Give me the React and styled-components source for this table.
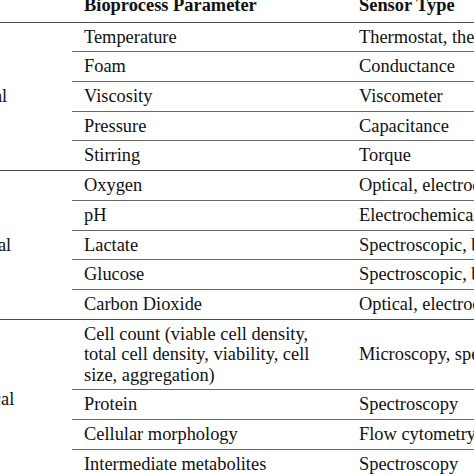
import React from "react"
import styled, { createGlobalStyle } from "styled-components"

const GlobalStyle = createGlobalStyle`
  html, body {
    margin: 0;
    padding: 0;
    background: #ffffff;
    overflow: hidden;
  }
`

const Page = styled.div`
  width: 474px;
  height: 474px;
  overflow: hidden;
  background: #ffffff;
`

const Table = styled.table`
  border-collapse: collapse;
  margin-top: -9px;
  margin-left: -120px;
  width: 767px;
  font-family: "Liberation Serif", "Times New Roman", serif;
  font-size: 18.4px;
  line-height: 20.6px;
  color: #111111;
  table-layout: fixed;
`

const Col = styled.col`
  width: ${p => p.w}px;
`

const HeadCell = styled.th`
  text-align: ${p => (p.center ? "center" : "left")};
  font-weight: 700;
  padding: 4.05px 12px 6.05px;
  border-bottom: 1.5px solid #4a4a4a;
  white-space: nowrap;
`

const GroupCell = styled.td`
  text-align: center;
  vertical-align: middle;
  padding: 4.05px 12px;
  border-bottom: 1.5px solid #4a4a4a;
  white-space: nowrap;
`

const Cell = styled.td`
  text-align: left;
  vertical-align: middle;
  padding: 4.05px 12px;
  border-bottom: ${p => (p.last ? "1.5px solid #4a4a4a" : "1.3px solid #6a6a6a")};
  white-space: ${p => (p.wrap ? "normal" : "nowrap")};
  overflow: hidden;
`

const groups = [
  {
    name: "Physical",
    rows: [
      ["Temperature", "Thermostat, thermocouple"],
      ["Foam", "Conductance"],
      ["Viscosity", "Viscometer"],
      ["Pressure", "Capacitance"],
      ["Stirring", "Torque"]
    ]
  },
  {
    name: "Chemical",
    rows: [
      ["Oxygen", "Optical, electrochemical"],
      ["pH", "Electrochemical"],
      ["Lactate", "Spectroscopic, biosensor"],
      ["Glucose", "Spectroscopic, biosensor"],
      ["Carbon Dioxide", "Optical, electrochemical"]
    ]
  },
  {
    name: "Biological",
    rows: [
      [
        "Cell count (viable cell density, total cell density, viability, cell size, aggregation)",
        "Microscopy, spectroscopy"
      ],
      ["Protein", "Spectroscopy"],
      ["Cellular morphology", "Flow cytometry"],
      ["Intermediate metabolites", "Spectroscopy"]
    ]
  }
]

function App() {
  return (
    <Page>
      <GlobalStyle />
      <Table>
        <colgroup>
          <Col w={192} />
          <Col w={275} />
          <Col w={300} />
        </colgroup>
        <thead>
          <tr>
            <HeadCell center>Type</HeadCell>
            <HeadCell>Bioprocess Parameter</HeadCell>
            <HeadCell>Sensor Type</HeadCell>
          </tr>
        </thead>
        <tbody>
          {groups.map(group =>
            group.rows.map(([param, sensor], i) => {
              const last = i === group.rows.length - 1
              return (
                <tr key={group.name + param}>
                  {i === 0 && (
                    <GroupCell rowSpan={group.rows.length}>{group.name}</GroupCell>
                  )}
                  <Cell wrap last={last}>
                    {param}
                  </Cell>
                  <Cell last={last}>{sensor}</Cell>
                </tr>
              )
            })
          )}
        </tbody>
      </Table>
    </Page>
  )
}

export default App
